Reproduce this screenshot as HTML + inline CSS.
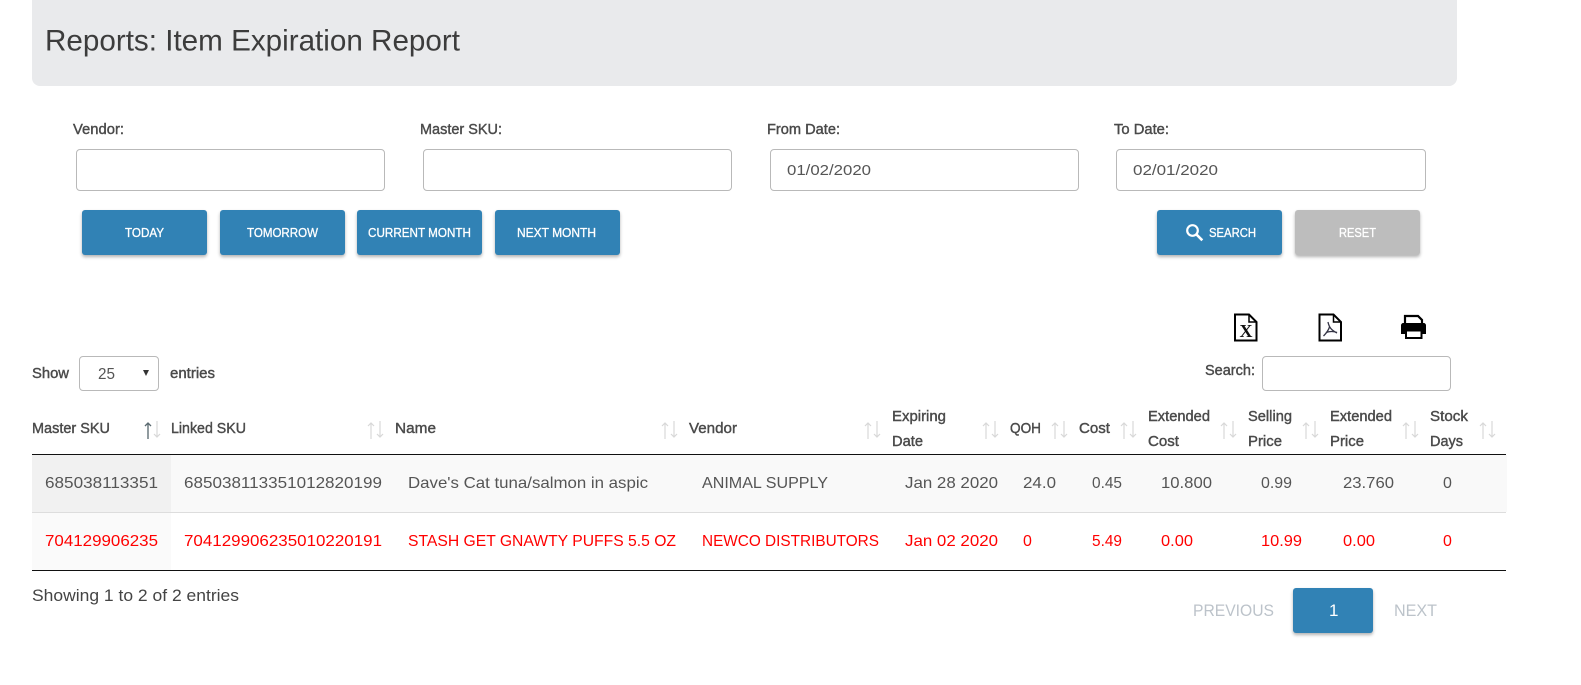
<!DOCTYPE html>
<html lang="en">
<head>
<meta charset="utf-8">
<title>Reports: Item Expiration Report</title>
<style>
html,body{margin:0;padding:0;background:#fff;width:1581px;height:685px;overflow:hidden}
body{position:relative;font-family:"Liberation Sans",sans-serif}
.b{position:absolute;box-sizing:border-box}
.in{border:1px solid #b9b9b9;border-radius:4px;background:#fff}
.btn{background:#3182b5;border-radius:3px;box-shadow:0 2px 3px rgba(0,0,0,.3)}
svg{position:absolute;left:0;top:0}
text{font-family:"Liberation Sans",sans-serif;font-size:15px;fill:#555}
.l{font-size:14.5px;fill:#4a4a4a;stroke:#4a4a4a;stroke-width:.4px}
.w{font-size:12.5px;fill:#fff;stroke:#fff;stroke-width:.3px}
.r{font-size:16px;fill:#555}
.red{font-size:16px;fill:#f00}
.g{font-size:16.5px;fill:#bcc3ca}
.ar{stroke:#d8d8d8;stroke-width:1.2;fill:none}
</style>
</head>
<body>
<div class="b" style="left:32px;top:0;width:1425px;height:86px;background:#e9eaec;border-radius:0 0 8px 8px"></div>

<div class="b in" style="left:76px;top:149px;width:309px;height:42px"></div>
<div class="b in" style="left:423px;top:149px;width:309px;height:42px"></div>
<div class="b in" style="left:770px;top:149px;width:309px;height:42px"></div>
<div class="b in" style="left:1116px;top:149px;width:310px;height:42px"></div>

<div class="b btn" style="left:82px;top:210px;width:125px;height:45px"></div>
<div class="b btn" style="left:220px;top:210px;width:125px;height:45px"></div>
<div class="b btn" style="left:357px;top:210px;width:125px;height:45px"></div>
<div class="b btn" style="left:495px;top:210px;width:125px;height:45px"></div>
<div class="b btn" style="left:1157px;top:210px;width:125px;height:45px"></div>
<div class="b btn" style="left:1295px;top:210px;width:125px;height:45px;background:#bdbdbd"></div>

<div class="b in" style="left:79px;top:356px;width:80px;height:35px"></div>
<div class="b in" style="left:1262px;top:356px;width:189px;height:35px"></div>

<div class="b" style="left:32px;top:455px;width:1475px;height:57px;background:#f9f9f9"></div>
<div class="b" style="left:32px;top:455px;width:139px;height:57px;background:#f1f1f1"></div>
<div class="b" style="left:32px;top:513px;width:139px;height:57px;background:#fafafa"></div>
<div class="b" style="left:32px;top:454px;width:1474px;height:1px;background:#111"></div>
<div class="b" style="left:32px;top:512px;width:1474px;height:1px;background:#ddd"></div>
<div class="b" style="left:32px;top:570px;width:1474px;height:1px;background:#111"></div>

<div class="b btn" style="left:1293px;top:588px;width:80px;height:45px"></div>

<svg width="1581" height="685" viewBox="0 0 1581 685" xmlns="http://www.w3.org/2000/svg">
<defs>
<g id="s"><path class="ar" d="M4 18V2M1 5l3-3 3 3"/><path class="ar" d="M13 0v16M10 13l3 3 3-3"/></g>
</defs>

<text x="45" y="50.500" style="font-size:30px;fill:#3c3c3c" textLength="415" lengthAdjust="spacingAndGlyphs">Reports: Item Expiration Report</text>

<text class="l" x="73" y="134" textLength="51" lengthAdjust="spacingAndGlyphs">Vendor:</text>
<text class="l" x="420" y="134" textLength="82" lengthAdjust="spacingAndGlyphs">Master SKU:</text>
<text class="l" x="767" y="134" textLength="73" lengthAdjust="spacingAndGlyphs">From Date:</text>
<text class="l" x="1114" y="134" textLength="55" lengthAdjust="spacingAndGlyphs">To Date:</text>

<text x="787" y="175" style="font-size:15px" textLength="84" lengthAdjust="spacingAndGlyphs">01/02/2020</text>
<text x="1133" y="175" style="font-size:15px" textLength="85" lengthAdjust="spacingAndGlyphs">02/01/2020</text>

<text class="w" x="125" y="237" textLength="39" lengthAdjust="spacingAndGlyphs">TODAY</text>
<text class="w" x="247" y="237" textLength="71" lengthAdjust="spacingAndGlyphs">TOMORROW</text>
<text class="w" x="368" y="237" textLength="103" lengthAdjust="spacingAndGlyphs">CURRENT MONTH</text>
<text class="w" x="517" y="237" textLength="79" lengthAdjust="spacingAndGlyphs">NEXT MONTH</text>
<text class="w" x="1209" y="237" textLength="47" lengthAdjust="spacingAndGlyphs">SEARCH</text>
<text class="w" x="1339" y="237" textLength="37" lengthAdjust="spacingAndGlyphs">RESET</text>

<circle cx="1192.500" cy="230.500" r="5.300" fill="none" stroke="#fff" stroke-width="2.200"/>
<path d="M1196.500 234.500l5.800 5.800" stroke="#fff" stroke-width="2.600" fill="none"/>

<path d="M1235 314.500h14l7.500 7.500v18.500h-21.500z" fill="#fff" stroke="#000" stroke-width="2"/>
<path d="M1249 314.500v7.500h7.500" fill="none" stroke="#000" stroke-width="1.500"/>
<text x="1239.500" y="337" style="font-family:'Liberation Serif',serif;font-size:18px;font-weight:bold;fill:#111">X</text>

<path d="M1319.500 314.500h14l7.500 7.500v18.500h-21.500z" fill="#fff" stroke="#000" stroke-width="2"/>
<path d="M1333.500 314.500v7.500h7.500" fill="none" stroke="#000" stroke-width="1.500"/>
<path d="M1328 322c1 5 3 8 9 11M1329.500 327c-1 3-3 6-6 9M1326 332.500c3-1 7-1.500 11 0" fill="none" stroke="#334" stroke-width="1.300"/>

<path d="M1405 329v-13h13l4 4v9" fill="#fff" stroke="#000" stroke-width="2.200"/>
<path d="M1401 325.500c0-1.500 1-2.500 2.500-2.500h20c1.500 0 2.500 1 2.500 2.500V334h-25z" fill="#000"/>
<rect x="1406" y="330.500" width="15.500" height="7.500" fill="#fff" stroke="#000" stroke-width="2"/>

<text class="l" x="32" y="378" textLength="37" lengthAdjust="spacingAndGlyphs">Show</text>
<text x="98" y="379" style="font-size:15.500px" textLength="17" lengthAdjust="spacingAndGlyphs">25</text>
<path d="M143 370h6l-3 6z" fill="#333"/>
<text class="l" x="170" y="378" textLength="45" lengthAdjust="spacingAndGlyphs">entries</text>
<text class="l" x="1205" y="375" textLength="50" lengthAdjust="spacingAndGlyphs">Search:</text>

<text class="l" x="32" y="433" textLength="78" lengthAdjust="spacingAndGlyphs">Master SKU</text>
<text class="l" x="171" y="433" textLength="75" lengthAdjust="spacingAndGlyphs">Linked SKU</text>
<text class="l" x="395" y="433" textLength="41" lengthAdjust="spacingAndGlyphs">Name</text>
<text class="l" x="689" y="433" textLength="48" lengthAdjust="spacingAndGlyphs">Vendor</text>
<text class="l" x="892" y="421" textLength="54" lengthAdjust="spacingAndGlyphs">Expiring</text>
<text class="l" x="892" y="446" textLength="31" lengthAdjust="spacingAndGlyphs">Date</text>
<text class="l" x="1010" y="433" textLength="31" lengthAdjust="spacingAndGlyphs">QOH</text>
<text class="l" x="1079" y="433" textLength="31" lengthAdjust="spacingAndGlyphs">Cost</text>
<text class="l" x="1148" y="421" textLength="62" lengthAdjust="spacingAndGlyphs">Extended</text>
<text class="l" x="1148" y="446" textLength="31" lengthAdjust="spacingAndGlyphs">Cost</text>
<text class="l" x="1248" y="421" textLength="44" lengthAdjust="spacingAndGlyphs">Selling</text>
<text class="l" x="1248" y="446" textLength="34" lengthAdjust="spacingAndGlyphs">Price</text>
<text class="l" x="1330" y="421" textLength="62" lengthAdjust="spacingAndGlyphs">Extended</text>
<text class="l" x="1330" y="446" textLength="34" lengthAdjust="spacingAndGlyphs">Price</text>
<text class="l" x="1430" y="421" textLength="38" lengthAdjust="spacingAndGlyphs">Stock</text>
<text class="l" x="1430" y="446" textLength="33" lengthAdjust="spacingAndGlyphs">Days</text>

<use href="#s" x="144" y="421"/>
<path d="M148 439V423M145 426l3-3 3 3" fill="none" stroke="#5a6a70" stroke-width="1.300"/>
<use href="#s" x="367" y="421"/>
<use href="#s" x="661" y="421"/>
<use href="#s" x="864" y="421"/>
<use href="#s" x="982" y="421"/>
<use href="#s" x="1051" y="421"/>
<use href="#s" x="1120" y="421"/>
<use href="#s" x="1220" y="421"/>
<use href="#s" x="1302" y="421"/>
<use href="#s" x="1402" y="421"/>
<use href="#s" x="1479" y="421"/>

<text class="r" x="45" y="488" textLength="113" lengthAdjust="spacingAndGlyphs">685038113351</text>
<text class="r" x="184" y="488" textLength="198" lengthAdjust="spacingAndGlyphs">685038113351012820199</text>
<text class="r" x="408" y="488" textLength="240" lengthAdjust="spacingAndGlyphs">Dave's Cat tuna/salmon in aspic</text>
<text class="r" x="702" y="488" textLength="126" lengthAdjust="spacingAndGlyphs">ANIMAL SUPPLY</text>
<text class="r" x="905" y="488" textLength="93" lengthAdjust="spacingAndGlyphs">Jan 28 2020</text>
<text class="r" x="1023" y="488" textLength="33" lengthAdjust="spacingAndGlyphs">24.0</text>
<text class="r" x="1092" y="488" textLength="30" lengthAdjust="spacingAndGlyphs">0.45</text>
<text class="r" x="1161" y="488" textLength="51" lengthAdjust="spacingAndGlyphs">10.800</text>
<text class="r" x="1261" y="488" textLength="31" lengthAdjust="spacingAndGlyphs">0.99</text>
<text class="r" x="1343" y="488" textLength="51" lengthAdjust="spacingAndGlyphs">23.760</text>
<text class="r" x="1443" y="488">0</text>

<text class="red" x="45" y="546" textLength="113" lengthAdjust="spacingAndGlyphs">704129906235</text>
<text class="red" x="184" y="546" textLength="198" lengthAdjust="spacingAndGlyphs">704129906235010220191</text>
<text class="red" x="408" y="546" textLength="268" lengthAdjust="spacingAndGlyphs">STASH GET GNAWTY PUFFS 5.5 OZ</text>
<text class="red" x="702" y="546" textLength="177" lengthAdjust="spacingAndGlyphs">NEWCO DISTRIBUTORS</text>
<text class="red" x="905" y="546" textLength="93" lengthAdjust="spacingAndGlyphs">Jan 02 2020</text>
<text class="red" x="1023" y="546">0</text>
<text class="red" x="1092" y="546" textLength="30" lengthAdjust="spacingAndGlyphs">5.49</text>
<text class="red" x="1161" y="546" textLength="32" lengthAdjust="spacingAndGlyphs">0.00</text>
<text class="red" x="1261" y="546" textLength="41" lengthAdjust="spacingAndGlyphs">10.99</text>
<text class="red" x="1343" y="546" textLength="32" lengthAdjust="spacingAndGlyphs">0.00</text>
<text class="red" x="1443" y="546">0</text>

<text x="32" y="601" style="font-size:17px;fill:#444" textLength="207" lengthAdjust="spacingAndGlyphs">Showing 1 to 2 of 2 entries</text>

<text class="g" x="1193" y="616" textLength="81" lengthAdjust="spacingAndGlyphs">PREVIOUS</text>
<text x="1329" y="616" style="font-size:17px;fill:#fff">1</text>
<text class="g" x="1394" y="616" textLength="43" lengthAdjust="spacingAndGlyphs">NEXT</text>
</svg>
</body>
</html>
